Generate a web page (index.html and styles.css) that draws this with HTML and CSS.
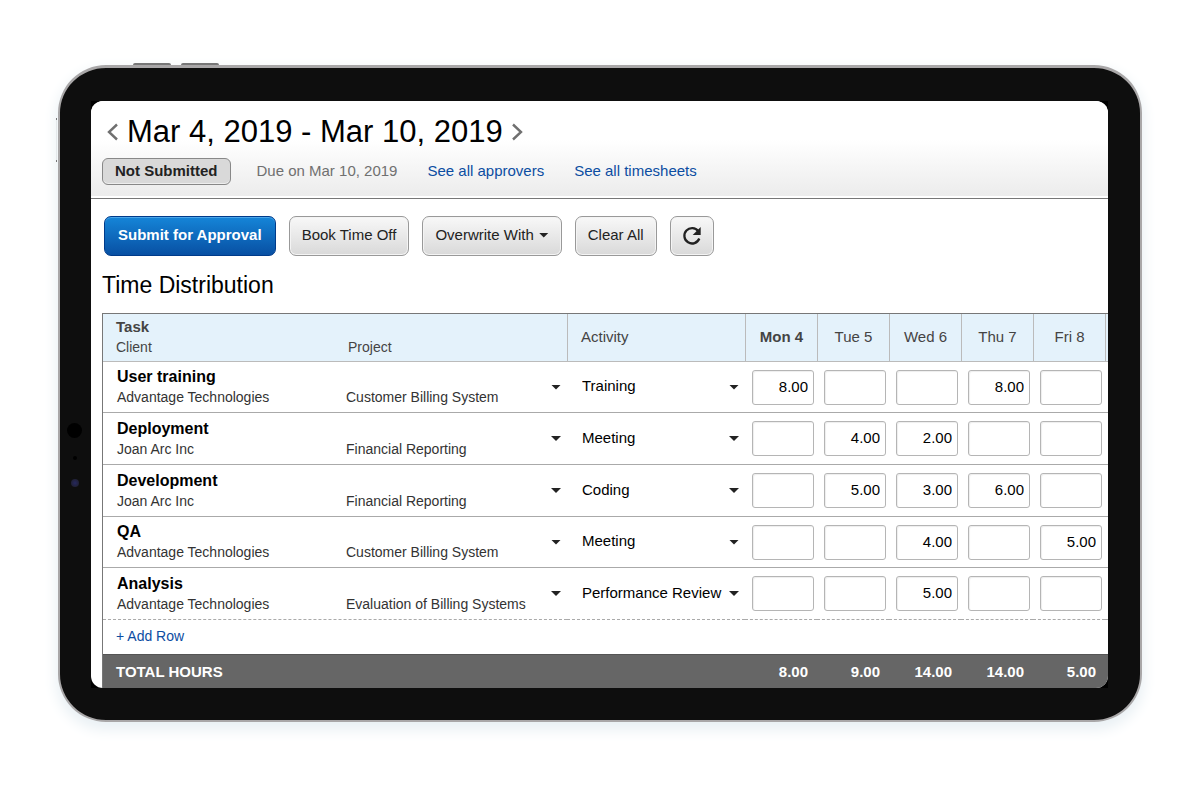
FILE: index.html
```html
<!DOCTYPE html>
<html lang="en">
<head>
<meta charset="utf-8">
<title>Timesheet</title>
<link rel="stylesheet" href="styles.css">
</head>
<body>
<div class="tablet">
  <span class="key key-up"></span><span class="key key-down"></span><span class="side-key"></span>
  <span class="lens lens-main"></span><span class="lens lens-dot"></span><span class="lens lens-blue"></span>
  <div class="display">
  <main class="screen">
    <header class="top">
      <div class="period">
        <button class="nav" aria-label="Previous week"><svg width="12" height="18" viewBox="0 0 12 18"><path d="M10 1.500 2 9l8 7.500"/></svg></button>
        <h1>Mar 4, 2019 - Mar 10, 2019</h1>
        <button class="nav" aria-label="Next week"><svg width="12" height="18" viewBox="0 0 12 18"><path d="M2 1.500 10 9l-8 7.500"/></svg></button>
      </div>
      <div class="meta">
        <span class="status">Not Submitted</span>
        <span class="due">Due on Mar 10, 2019</span>
        <a href="#">See all approvers</a>
        <a href="#">See all timesheets</a>
      </div>
    </header>
    <div class="toolbar">
      <button class="btn primary">Submit for Approval</button>
      <button class="btn">Book Time Off</button>
      <button class="btn">Overwrite With <span class="caret"></span></button>
      <button class="btn">Clear All</button>
      <button class="btn icon" aria-label="Refresh"><svg width="20" height="20" viewBox="0 0 20 20"><path d="M16.300 5.200A7.700 7.700 0 1 0 17.300 12.500" fill="none" stroke="#222" stroke-width="2.300"/><path d="M18.700 1v8h-8z" fill="#222"/></svg></button>
    </div>
    <h2>Time Distribution</h2>
    <table>
      <colgroup><col><col class="c-act"><col class="c-day"><col class="c-day"><col class="c-day"><col class="c-day"><col class="c-day"><col class="c-end"></colgroup>
      <thead>
        <tr>
          <th><div class="pair"><b>Task</b><span>Client</span><span>Project</span></div></th>
          <th class="act">Activity</th>
          <th class="day"><b>Mon 4</b></th><th class="day">Tue 5</th><th class="day">Wed 6</th><th class="day">Thu 7</th><th class="day">Fri 8</th><th></th>
        </tr>
      </thead>
      <tbody>
        <tr>
          <td><button class="task"><b>User training</b><span>Advantage Technologies</span><span>Customer Billing System</span><i class="caret"></i></button></td>
          <td><div class="pick"><select aria-label="Activity for User training"><option>Training</option></select><i class="caret"></i></div></td>
          <td class="h"><input aria-label="User training Mon 4" value="8.00"></td><td class="h"><input aria-label="User training Tue 5"></td><td class="h"><input aria-label="User training Wed 6"></td><td class="h"><input aria-label="User training Thu 7" value="8.00"></td><td class="h"><input aria-label="User training Fri 8"></td><td></td>
        </tr>
        <tr>
          <td><button class="task"><b>Deployment</b><span>Joan Arc Inc</span><span>Financial Reporting</span><i class="caret"></i></button></td>
          <td><div class="pick"><select aria-label="Activity for Deployment"><option>Meeting</option></select><i class="caret"></i></div></td>
          <td class="h"><input aria-label="Deployment Mon 4"></td><td class="h"><input aria-label="Deployment Tue 5" value="4.00"></td><td class="h"><input aria-label="Deployment Wed 6" value="2.00"></td><td class="h"><input aria-label="Deployment Thu 7"></td><td class="h"><input aria-label="Deployment Fri 8"></td><td></td>
        </tr>
        <tr>
          <td><button class="task"><b>Development</b><span>Joan Arc Inc</span><span>Financial Reporting</span><i class="caret"></i></button></td>
          <td><div class="pick"><select aria-label="Activity for Development"><option>Coding</option></select><i class="caret"></i></div></td>
          <td class="h"><input aria-label="Development Mon 4"></td><td class="h"><input aria-label="Development Tue 5" value="5.00"></td><td class="h"><input aria-label="Development Wed 6" value="3.00"></td><td class="h"><input aria-label="Development Thu 7" value="6.00"></td><td class="h"><input aria-label="Development Fri 8"></td><td></td>
        </tr>
        <tr>
          <td><button class="task"><b>QA</b><span>Advantage Technologies</span><span>Customer Billing System</span><i class="caret"></i></button></td>
          <td><div class="pick"><select aria-label="Activity for QA"><option>Meeting</option></select><i class="caret"></i></div></td>
          <td class="h"><input aria-label="QA Mon 4"></td><td class="h"><input aria-label="QA Tue 5"></td><td class="h"><input aria-label="QA Wed 6" value="4.00"></td><td class="h"><input aria-label="QA Thu 7"></td><td class="h"><input aria-label="QA Fri 8" value="5.00"></td><td></td>
        </tr>
        <tr class="last">
          <td><button class="task"><b>Analysis</b><span>Advantage Technologies</span><span>Evaluation of Billing Systems</span><i class="caret"></i></button></td>
          <td><div class="pick"><select aria-label="Activity for Analysis"><option>Performance Review</option></select><i class="caret"></i></div></td>
          <td class="h"><input aria-label="Analysis Mon 4"></td><td class="h"><input aria-label="Analysis Tue 5"></td><td class="h"><input aria-label="Analysis Wed 6" value="5.00"></td><td class="h"><input aria-label="Analysis Thu 7"></td><td class="h"><input aria-label="Analysis Fri 8"></td><td></td>
        </tr>
        <tr class="add"><td colspan="8"><a href="#">+ Add Row</a></td></tr>
      </tbody>
      <tfoot>
        <tr><th colspan="2">TOTAL HOURS</th><td>8.00</td><td>9.00</td><td>14.00</td><td>14.00</td><td>5.00</td><td></td></tr>
      </tfoot>
    </table>
  </main>
  </div>
</div>
</body>
</html>
```
FILE: styles.css
```css
* { box-sizing: border-box; }
body {
  margin: 0;
  padding: 65px 58px;
  background: #fff;
  color: #000;
  font: 15px/20px "Liberation Sans", Arial, sans-serif;
}
button, input, select { font: inherit; color: inherit; }
a { color: #0c4da2; text-decoration: none; }

/* Device frame */
.tablet {
  position: relative;
  padding: 33px 32px 32px 31px;
  border: 2px solid #a9a7a8;
  border-top-width: 3px;
  border-radius: 48px;
  background: #0e0e0e;
  box-shadow: 0 6px 14px 2px #e9f0f4;
}
.display { background: #000; }
.screen { border-radius: 12px; overflow: hidden; background: #fff; }
.key, .side-key, .lens { position: absolute; }
.key { top: -5px; width: 38px; height: 2px; border-radius: 2px 2px 0 0; background: #777; }
.key-up { left: 73px; }
.key-down { left: 121px; }
.side-key { top: 50px; left: -4px; width: 1px; height: 44px; background: #e4e8ea; border: solid #777; border-width: 2px 0; }
.lens { border-radius: 50%; background: #000; }
.lens-main { left: 7px; top: 355px; width: 15px; height: 15px; }
.lens-dot { left: 13px; top: 388px; width: 4px; height: 4px; }
.lens-blue { left: 11px; top: 411px; width: 8px; height: 8px; background: radial-gradient(#26285e, #1d1d24); }

/* Period header */
.top {
  padding: 12px 11px 13px;
  border-bottom: 1px solid #777;
  background: linear-gradient(#fff 40%, #ebebeb);
  box-shadow: inset 0 -2px #fff;
}
.period { display: flex; align-items: center; gap: 8px; padding-left: 5px; }
.period h1 { margin: 0; font-size: 31px; line-height: 38px; font-weight: 400; }
.nav { display: flex; padding: 0; border: 0; background: none; }
.nav svg { fill: none; stroke: #707070; stroke-width: 2.400; }
.meta { display: flex; align-items: baseline; gap: 30px; margin-top: 7px; }
.status {
  margin-right: -4px;
  padding: 2px 12px 3px;
  border: 1px solid #888;
  border-radius: 6px;
  background: #d9d9d9;
  box-shadow: inset 0 -1px #eee;
  color: #222;
  font-weight: 700;
}
.due { color: #707070; }

/* Toolbar */
.toolbar { display: flex; gap: 13px; padding: 17px 13px 0; }
.btn {
  display: flex;
  align-items: center;
  gap: 5px;
  height: 40px;
  padding: 0 12px 2px;
  border: 1px solid #999;
  border-radius: 7px;
  background: linear-gradient(#f8f8f8, #d9d9d9);
  box-shadow: inset 0 0 0 1px #f4f4f4;
  color: #222;
}
.primary {
  padding: 0 13px 2px;
  border-color: #003b8a;
  background: linear-gradient(#1585d8, #0850a3);
  box-shadow: inset 0 1px #4aa5e8;
  color: #fff;
  font-weight: 700;
}
.icon { padding: 0 11px; }
.caret {
  width: 10px;
  height: 5px;
  background: #222;
  clip-path: polygon(0 0, 100% 0, 50% 100%);
}
h2 { margin: 16px 11px 15px; font-size: 23px; line-height: 26px; font-weight: 400; }

/* Time grid */
table {
  width: calc(100% - 11px);
  margin-left: 11px;
  table-layout: fixed;
  border-spacing: 0;
  border: solid #777;
  border-width: 1px 0 0 1px;
}
th, td { padding: 0; text-align: left; font-weight: 400; }
.c-act { width: 178px; }
.c-day { width: 72px; }
.c-end { width: 3px; }
thead th { height: 48px; padding-bottom: 1px; background: #e4f2fb; border-bottom: 1px solid #bbb; color: #444; }
thead th + th { border-left: 1px solid #bbb; }
thead .act { padding-left: 13px; }
thead .day { text-align: center; }
.pair, .task {
  display: grid;
  grid-template-columns: 229px 1fr 10px;
  align-items: center;
}
.pair { padding: 0 13px; font-size: 14px; grid-template-columns: 232px 1fr; }
.pair b, .task b { grid-column: 1 / 3; font-size: 16px; }
.pair b { font-size: 15px; }
tbody td { height: 52px; border-bottom: 1px solid #aaa; }
tbody tr:nth-child(3n + 1) td { height: 51px; }
.task {
  width: 100%;
  padding: 0 6px 0 14px;
  border: 0;
  background: none;
  text-align: left;
  font-size: 14px;
  line-height: 21px;
}
.task span { grid-row: 2; color: #333; }
.task .caret { grid-area: 1 / 3 / 3 / 4; }
.pick { display: grid; align-items: center; }
.pick > * { grid-area: 1 / 1; }
.pick select {
  appearance: none;
  height: 36px;
  padding: 0 0 2px 15px;
  border: 0;
  background: none;
}
.pick .caret { justify-self: end; margin-right: 6px; pointer-events: none; }
.h { padding: 0 3px 0 7px; }
.h input {
  display: block;
  width: 100%;
  height: 35px;
  padding: 0 5px 2px;
  border: 1px solid #b5b5b5;
  border-radius: 3px;
  background: #fff;
  box-shadow: inset 1px 1px 1px #eee;
  text-align: right;
}
.last td { border-bottom: 1px dashed #aaa; }
tbody .add td { height: 34px; padding-left: 13px; padding-bottom: 2px; border: 0; font-size: 14px; }
tfoot th, tfoot td { height: 34px; background: #666; border-top: 1px solid #555; color: #fff; font-weight: 700; text-align: right; padding-right: 9px; }
tfoot th { text-align: left; padding-left: 13px; }
tfoot td:last-child { padding: 0; }
```
